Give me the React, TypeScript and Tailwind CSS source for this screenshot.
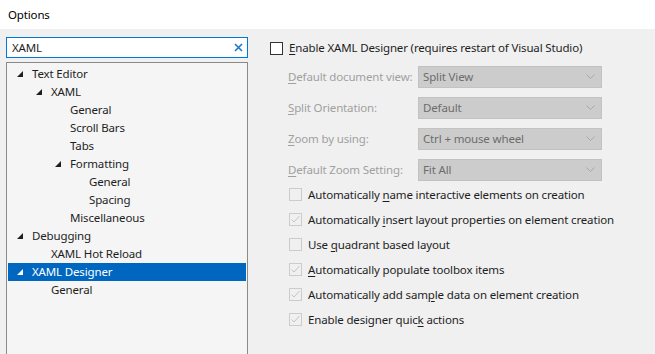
import React from "react";

const font = { fontFamily: '"Segoe UI", "Noto Sans", "Open Sans", sans-serif' };

function Tri({ white }: { white?: boolean }) {
  return (
    <svg width="6" height="6" viewBox="0 0 6 6" className="shrink-0">
      <polygon points="6,0 6,6 0,6" fill={white ? "#ffffff" : "#1e1e1e"} />
    </svg>
  );
}

type Node = { label: string; level: number; expandable?: boolean; selected?: boolean };

const nodes: Node[] = [
  { label: "Text Editor", level: 0, expandable: true },
  { label: "XAML", level: 1, expandable: true },
  { label: "General", level: 2 },
  { label: "Scroll Bars", level: 2 },
  { label: "Tabs", level: 2 },
  { label: "Formatting", level: 2, expandable: true },
  { label: "General", level: 3 },
  { label: "Spacing", level: 3 },
  { label: "Miscellaneous", level: 2 },
  { label: "Debugging", level: 0, expandable: true },
  { label: "XAML Hot Reload", level: 1 },
  { label: "XAML Designer", level: 0, expandable: true, selected: true },
  { label: "General", level: 1 },
];

const indents = ["pl-[24px]", "pl-[43px]", "pl-[62px]", "pl-[81px]"];

function TreeRow({ n }: { n: Node }) {
  return (
    <div
      className={`h-[18px] flex items-center ${indents[n.level]} ${
        n.selected ? "bg-[#0067c0] text-white" : "text-[#1e1e1e]"
      }`}
    >
      <div className="w-[8px] -ml-[15px] mr-[7px] flex items-center">
        {n.expandable ? <Tri white={n.selected} /> : null}
      </div>
      <span className="leading-none whitespace-nowrap">{n.label}</span>
    </div>
  );
}

function Dropdown({ ul, rest, value }: { ul: string; rest: string; value: string }) {
  return (
    <div className="flex items-center h-[22px]">
      <div className="w-[130px] shrink-0 whitespace-nowrap text-[#a0a0a0]">
        <span className="underline underline-offset-2">{ul}</span>
        {rest}
      </div>
      <div className="w-[184px] h-[22px] shrink-0 bg-[#cccccc] border border-[#c2c2c2] flex items-center justify-between pl-[4px] pr-[6px] text-[#6d6d6d]">
        <span className="whitespace-nowrap">{value}</span>
        <svg width="9" height="6" viewBox="0 0 9 6">
          <polyline points="0.5,0.5 4.5,4.5 8.5,0.5" fill="none" stroke="#a8a8a8" strokeWidth="1" />
        </svg>
      </div>
    </div>
  );
}

function Check({ checked, children }: { checked?: boolean; children: React.ReactNode }) {
  return (
    <div className="flex items-center h-[25px]">
      <div className="w-[13px] h-[13px] shrink-0 border border-[#cccccc] bg-[#f0f0f0] flex items-center justify-center mr-[6px]">
        {checked ? (
          <svg width="11" height="11" viewBox="0 0 11 11">
            <polyline points="1.5,5.5 4,8 9.5,2" fill="none" stroke="#c4c4c4" strokeWidth="1" />
          </svg>
        ) : null}
      </div>
      <span className="text-[#1e1e1e] whitespace-nowrap">{children}</span>
    </div>
  );
}

export default function App() {
  return (
    <div
      className="w-[655px] h-[354px] overflow-hidden bg-[#f0f0f0] text-[11.5px] tracking-[-0.15px] flex flex-col"
      style={font}
    >
      <div className="h-[29px] bg-white flex items-center pl-[8px] text-black shrink-0">Options</div>
      <div className="flex flex-1 min-h-0">
        {/* left */}
        <div className="w-[242px] ml-[6px] pt-[8px] flex flex-col shrink-0">
          <div className="h-[21px] border border-[#0078d7] bg-white flex items-center justify-between pl-[5px] pr-[4px] text-[#1e1e1e]">
            <span>XAML</span>
            <svg width="9" height="9" viewBox="0 0 9 9">
              <path d="M1 1 L8 8 M8 1 L1 8" stroke="#1e78c8" strokeWidth="1.6" />
            </svg>
          </div>
          <div className="mt-[4px] flex-1 border border-[#8a8a8a] bg-[#f5f5f5] pt-[2px] px-[1px] border-b-0">
            {nodes.map((n, i) => (
              <TreeRow key={i} n={n} />
            ))}
          </div>
        </div>
        {/* right */}
        <div className="ml-[22px] pt-[12px] flex flex-col">
          <div className="flex items-center h-[14px]">
            <div className="w-[13px] h-[13px] shrink-0 border border-[#333333] bg-white mr-[6px]" />
            <span className="text-[#1e1e1e] whitespace-nowrap">
              <span className="underline underline-offset-2">E</span>nable XAML Designer (requires restart of Visual Studio)
            </span>
          </div>
          <div className="ml-[18px] mt-[11px] flex flex-col gap-[9px]">
            <Dropdown ul="D" rest="efault document view:" value="Split View" />
            <Dropdown ul="S" rest="plit Orientation:" value="Default" />
            <Dropdown ul="Z" rest="oom by using:" value="Ctrl + mouse wheel" />
            <Dropdown ul="D" rest="efault Zoom Setting:" value="Fit All" />
          </div>
          <div className="ml-[19px] mt-[1px] flex flex-col">
            <Check>
              Automatically <span className="underline underline-offset-2">n</span>ame interactive elements on creation
            </Check>
            <Check checked>
              Automatically <span className="underline underline-offset-2">i</span>nsert layout properties on element creation
            </Check>
            <Check>
              Use <span className="underline underline-offset-2">q</span>uadrant based layout
            </Check>
            <Check checked>
              <span className="underline underline-offset-2">A</span>utomatically populate toolbox items
            </Check>
            <Check checked>
              Automatically add sam<span className="underline underline-offset-2">p</span>le data on element creation
            </Check>
            <Check checked>
              Enable designer quic<span className="underline underline-offset-2">k</span> actions
            </Check>
          </div>
        </div>
      </div>
    </div>
  );
}
